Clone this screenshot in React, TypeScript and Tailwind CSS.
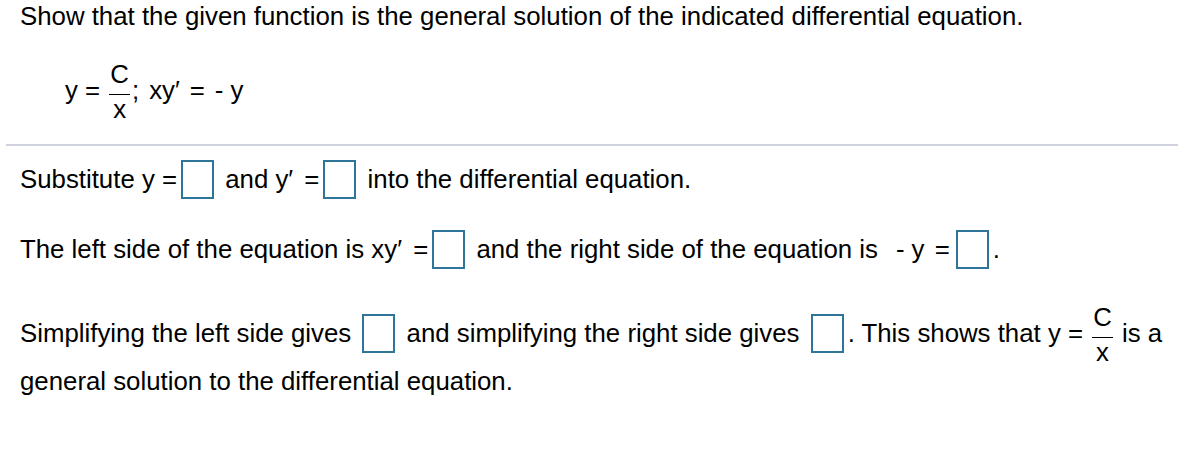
import React from "react";

const Box = () => (
  <span className="inline-block w-[33px] h-[39px] mx-1 border-2 border-[#2f7599] align-[-11px]" />
);

const Frac = ({ top, bottom }: { top: string; bottom: string }) => (
  <span className="inline-flex flex-col items-center align-[16px] mx-[2px]">
    <span className="leading-none px-[1px] pb-[6.5px] border-b border-black">{top}</span>
    <span className="leading-none mt-[2px]">{bottom}</span>
  </span>
);

// prime sits a little loose in the reference
const Prime = () => <span className="mr-[4px]">′</span>;

const App = () => {
  return (
    <div className="w-[1178px] h-[456px] bg-white text-black text-[25.8px] font-['Liberation_Sans',Arial,sans-serif] overflow-hidden">
      {/* PROMPT */}
      <div className="pl-5 pt-[1px] leading-[30px] whitespace-nowrap">
        Show that the given function is the general solution of the indicated differential equation.
      </div>

      {/* GIVEN EQUATION */}
      <div className="pl-[65px] mt-[31px] h-[62.8px] leading-[30px] whitespace-nowrap">
        y = <Frac top="C" bottom="x" />
        ;<span className="ml-[10px]">xy′</span>
        <span className="mx-[10px]">=</span>
        <span>-</span>
        <span className="ml-[7px]">y</span>
      </div>

      {/* DIVIDER */}
      <div className="ml-[6px] mt-[19px] border-t-2 border-[#cfd2dc]" />

      {/* STEPS */}
      <div className="pl-5 mt-[14px] h-[39px] leading-[30px] whitespace-nowrap">
        Substitute y =<Box /> and y<Prime /> =<Box /> into the differential equation.
      </div>

      <div className="pl-5 mt-[31px] h-[39px] leading-[30px] whitespace-nowrap">
        The left side of the equation is xy<Prime /> =<Box /> and the right side of the equation is
        <span className="ml-[18px]">-</span>
        <span className="ml-[7px] mr-[3px]">y</span> =<span className="ml-[2px]" />
        <Box />.
      </div>

      <div className="pl-5 mt-[36px] h-[61px] leading-[30px] whitespace-nowrap">
        Simplifying the left side gives <Box /> and simplifying the right side gives <Box />. This
        shows that y = <Frac top="C" bottom="x" /> is a
      </div>

      <div className="pl-5 h-[30px] leading-[30px] whitespace-nowrap">
        general solution to the differential equation.
      </div>
    </div>
  );
};

export default App;
